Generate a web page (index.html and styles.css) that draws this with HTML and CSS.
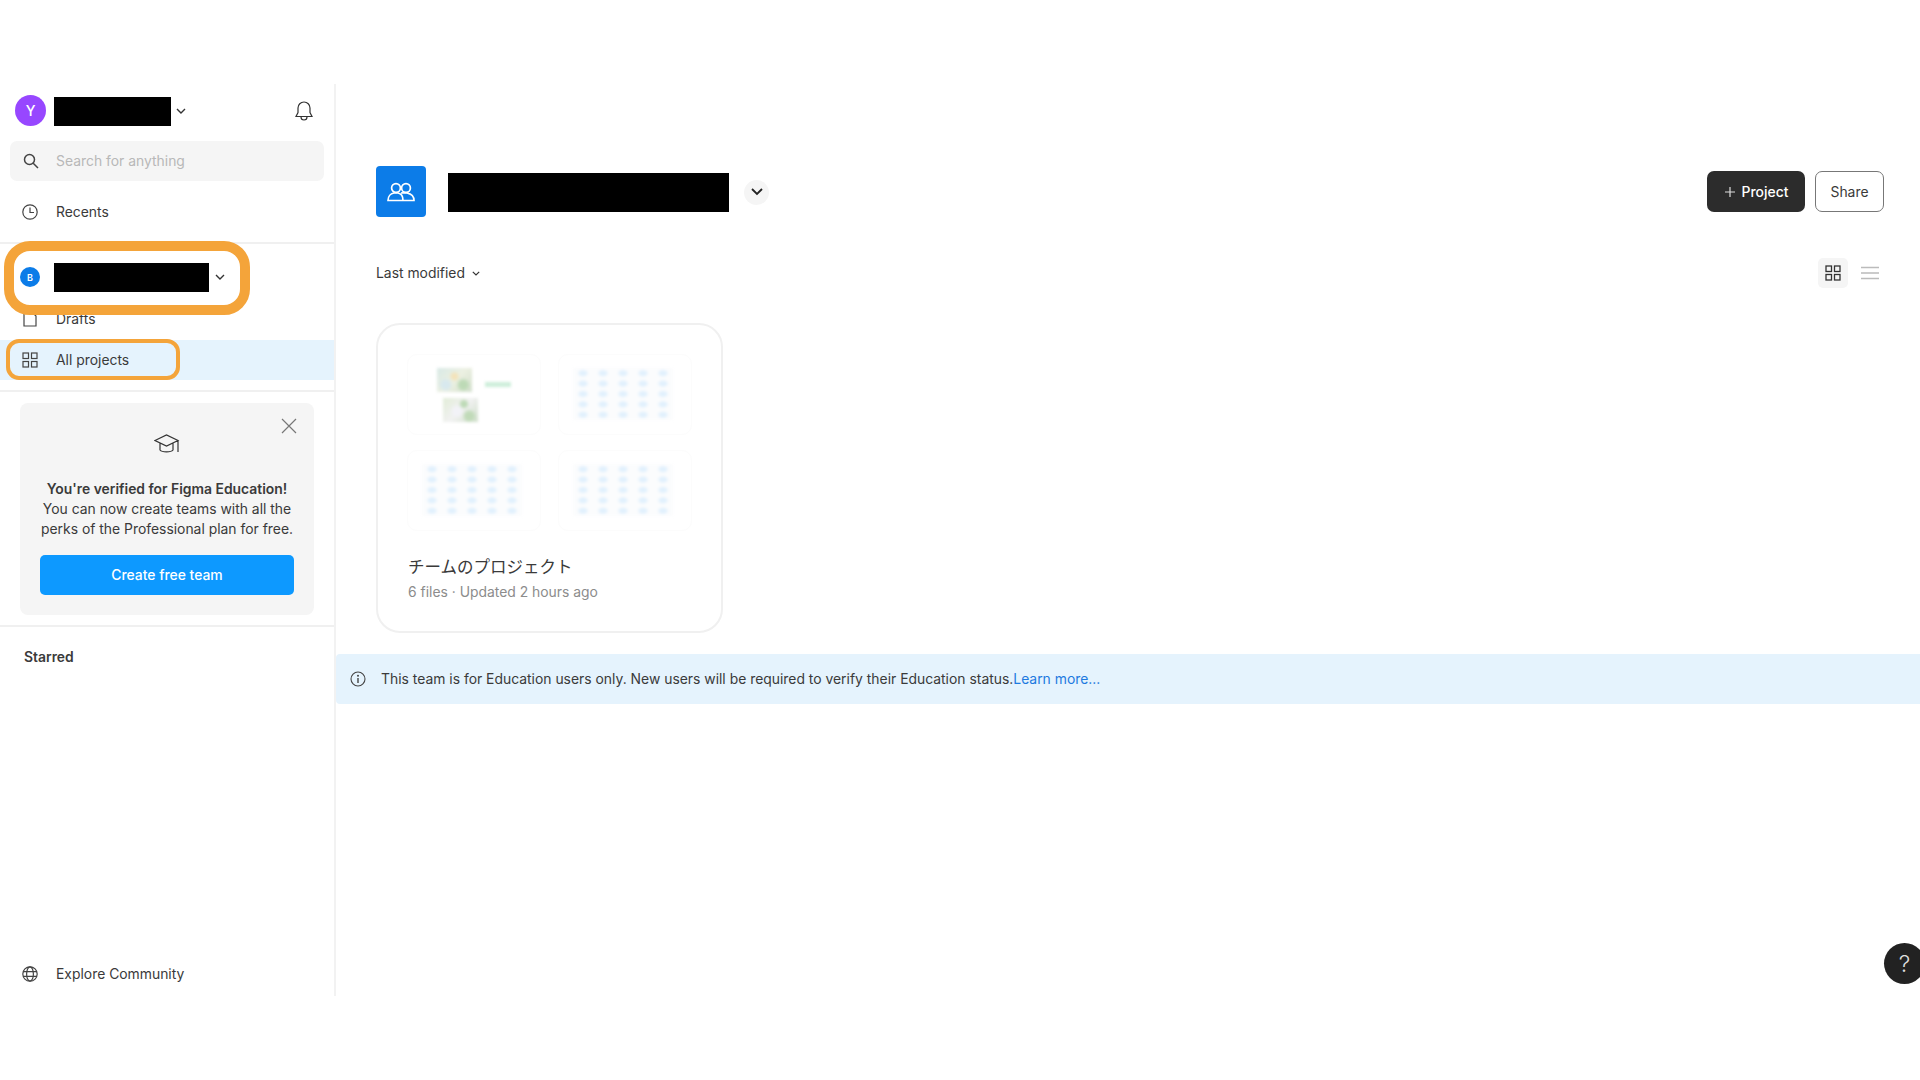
FILE: index.html
```html
<!DOCTYPE html>
<html lang="en">
<head>
<meta charset="utf-8">
<title>Team projects</title>
<link rel="stylesheet" href="styles.css">
</head>
<body>
<div class="app">
  <aside class="sidebar">
    <div class="account">
      <span class="avatar">Y</span>
      <span class="redact redact-account"></span>
      <svg class="chev" width="10" height="6" viewBox="0 0 10 6"><path d="M1 1l4 4 4-4" fill="none" stroke="#333" stroke-width="1.4"/></svg>
      <svg class="bell" width="20" height="22" viewBox="0 0 20 22"><path d="M10 2a6 6 0 0 0-6 6v4.500L2 16.500h16L16 12.500V8a6 6 0 0 0-6-6zM7 17a3 3 0 0 0 6 0" fill="none" stroke="#333" stroke-width="1.200"/></svg>
    </div>
    <div class="search">
      <svg width="16" height="16" viewBox="0 0 16 16"><circle cx="6.500" cy="6.500" r="5" fill="none" stroke="#444" stroke-width="1.500"/><path d="M10.200 10.200L15 15" stroke="#444" stroke-width="1.500"/></svg>
      <span>Search for anything</span>
    </div>
    <div class="nav-row recents">
      <svg class="icon" width="16" height="16" viewBox="0 0 16 16"><circle cx="8" cy="8" r="7.200" fill="none" stroke="#444" stroke-width="1.200"/><path d="M8 3.500V8.500H12" fill="none" stroke="#444" stroke-width="1.200"/></svg>
      <span>Recents</span>
    </div>
    <div class="section team">
      <div class="team-row">
        <span class="team-badge">B</span>
        <span class="redact redact-team"></span>
        <svg class="chev" width="10" height="6" viewBox="0 0 10 6"><path d="M1 1l4 4 4-4" fill="none" stroke="#333" stroke-width="1.400"/></svg>
      </div>
      <div class="nav-row drafts">
        <svg class="icon" width="14" height="16" viewBox="0 0 14 16"><path d="M1 1h8l4 4v10H1z" fill="none" stroke="#444" stroke-width="1.200"/></svg>
        <span>Drafts</span>
      </div>
      <div class="nav-row active">
        <svg class="icon" width="16" height="16" viewBox="0 0 16 16"><g fill="none" stroke="#444" stroke-width="1.200"><rect x="1" y="1" width="5.500" height="5.500"/><rect x="9.500" y="1" width="5.500" height="5.500"/><rect x="1" y="9.500" width="5.500" height="5.500"/><rect x="9.500" y="9.500" width="5.500" height="5.500"/></g></svg>
        <span>All projects</span>
      </div>
    </div>
    <div class="section promo-wrap">
      <div class="promo">
        <svg class="promo-close" width="16" height="16" viewBox="0 0 16 16"><path d="M1 1l14 14M15 1L1 15" stroke="#777" stroke-width="1.200"/></svg>
        <svg class="promo-icon" width="26" height="20" viewBox="0 0 26 20"><path d="M1 6.500L12.500 1 24 6.500 12.500 12zM6 9v7c2 2.500 11 2.500 13 0V9M24 6.500V18" fill="none" stroke="#333" stroke-width="1.200"/></svg>
        <p class="promo-text"><strong>You're verified for Figma Education!</strong><br>You can now create teams with all the<br>perks of the Professional plan for free.</p>
        <div class="promo-btn">Create free team</div>
      </div>
    </div>
    <div class="starred">Starred</div>
    <div class="nav-row explore">
      <svg class="icon" width="16" height="16" viewBox="0 0 16 16"><g fill="none" stroke="#444" stroke-width="1.200"><circle cx="8" cy="8" r="7.200"/><ellipse cx="8" cy="8" rx="3.400" ry="7.200"/><path d="M1 5.700h14M1 10.300h14"/></g></svg>
      <span>Explore Community</span>
    </div>
    <div class="mark mark-team"></div>
    <div class="mark mark-projects"></div>
  </aside>
  <main class="main">
    <div class="page-head">
      <div class="team-icon">
        <svg width="28" height="20" viewBox="0 0 28 20"><g fill="none" stroke="#fff" stroke-width="1.700"><circle cx="9" cy="6" r="4.400"/><circle cx="19" cy="6" r="4.400"/><path d="M1 18.500c0-4.500 3-7 6-7.500h4c3 .5 5 3 5 7.500zM14 11c1-.2 2-.2 3 0h3c4 .8 7 3 7 7.500H16"/></g></svg>
      </div>
      <span class="redact redact-title"></span>
      <span class="round-chev"><svg width="12" height="8" viewBox="0 0 12 8"><path d="M1 1l5 5 5-5" fill="none" stroke="#222" stroke-width="1.800"/></svg></span>
      <div class="head-actions">
        <div class="btn btn-dark"><svg width="12" height="12" viewBox="0 0 12 12"><path d="M6 1v10M1 6h10" stroke="#ddd" stroke-width="1.200"/></svg>Project</div>
        <div class="btn btn-line">Share</div>
      </div>
    </div>
    <div class="toolbar">
      <div class="sort">Last modified <svg width="8" height="5" viewBox="0 0 8 5"><path d="M.8.800L4 4 7.200.800" fill="none" stroke="#333" stroke-width="1.200"/></svg></div>
      <div class="views">
        <span class="view view-on"><svg width="16" height="16" viewBox="0 0 16 16"><g fill="none" stroke="#333" stroke-width="1.300"><rect x="1" y="1" width="5.500" height="5.500"/><rect x="9.500" y="1" width="5.500" height="5.500"/><rect x="1" y="9.500" width="5.500" height="5.500"/><rect x="9.500" y="9.500" width="5.500" height="5.500"/></g></svg></span>
        <span class="view"><svg width="18" height="14" viewBox="0 0 18 14"><path d="M0 1.500h18M0 7h18M0 12.500h18" stroke="#bbb" stroke-width="1.400"/></svg></span>
      </div>
    </div>
    <article class="project">
      <div class="thumbs">
        <div class="thumb">
          <div class="shot shot-a"></div>
          <div class="shot shot-b"></div>
          <div class="mini"></div>
        </div>
        <div class="thumb"><div class="dots"></div></div>
        <div class="thumb"><div class="dots"></div></div>
        <div class="thumb"><div class="dots"></div></div>
      </div>
      <div class="project-name">チームのプロジェクト</div>
      <div class="project-meta">6 files · Updated 2 hours ago</div>
    </article>
    <div class="banner">
      <svg width="16" height="16" viewBox="0 0 16 16"><circle cx="8" cy="8" r="7" fill="none" stroke="#444" stroke-width="1.100"/><path d="M8 7v5" stroke="#444" stroke-width="1.400"/><circle cx="8" cy="4.700" r="1" fill="#444"/></svg>
      <span>This team is for Education users only. New users will be required to verify their Education status.<a class="learn">Learn more...</a></span>
    </div>
  </main>
</div>
<div class="help">?</div>
</body>
</html>
```
FILE: styles.css
```css
* { box-sizing: border-box; }
html, body { margin: 0; height: 100%; overflow: hidden; background: #fff; }
body { font-family: Inter, "Noto Sans CJK JP", sans-serif; font-size: 13.9px; color: #3a3a3a; position: relative; }
.app { display: flex; height: 912px; margin-top: 84px; }
.sidebar { width: 336px; flex: none; border-right: 2px solid #f2f2f2; display: flex; flex-direction: column; position: relative; }
.redact { display: block; background: #000; flex: none; }
.account { display: flex; align-items: center; height: 53px; padding-left: 15px; }
.avatar { width: 31px; height: 31px; border-radius: 50%; background: #9747ff; color: #fff; font-size: 14px; font-weight: 500; display: flex; align-items: center; justify-content: center; flex: none; }
.redact-account { width: 117px; height: 29px; margin: 2px 0 0 8px; }
.chev { margin-left: 5px; flex: none; }
.bell { margin-left: auto; margin-right: 20px; }
.search { display: flex; align-items: center; height: 40px; margin: 4px 10px 0; padding-left: 13px; border-radius: 7px; background: #f5f5f5; color: #b8b8b8; }
.search span { margin-left: 17px; }
.nav-row { display: flex; align-items: center; height: 40px; padding-left: 22px; }
.nav-row .icon { width: 16px; flex: none; margin-right: 17px; }
.nav-row span { margin-left: 1px; }
.recents { margin-top: 11px; }
.section { border-top: 2px solid #f0f0f0; }
.team { margin-top: 10px; padding: 13px 0 10px; border-bottom: 2px solid #f0f0f0; }
.team-row { display: flex; align-items: center; height: 40px; padding-left: 20px; }
.team-badge { width: 20px; height: 20px; border-radius: 50%; background: #0c7ce8; color: #fff; font-size: 9px; font-weight: 600; display: flex; align-items: center; justify-content: center; flex: none; }
.redact-team { width: 155px; height: 29px; margin-left: 14px; }
.team-row .chev { margin-left: 6px; }
.drafts { margin-top: 2px; }
.active { margin-top: 1px; background: #e5f3fd; }
.promo-wrap { border-top: 0; padding: 11px 20px 10px; border-bottom: 2px solid #f0f0f0; }
.promo { position: relative; height: 212px; background: #f5f5f5; border-radius: 8px; padding-top: 31px; text-align: center; }
.promo-close { position: absolute; top: 15px; right: 17px; }
.promo-icon { display: block; margin: 0 auto; }
.promo-text { margin: 25px 0 0; line-height: 20px; }
.promo-text strong { font-weight: 600; }
.promo-btn { margin: 16px 20px 0; height: 40px; line-height: 40px; border-radius: 5px; background: #0d99ff; color: #fff; font-weight: 500; }
.starred { margin: 20px 0 0 24px; font-weight: 600; line-height: 20px; }
.explore { margin-top: auto; margin-bottom: 2px; }
.mark { position: absolute; border-style: solid; border-color: #f4a43a; }
.mark-team { left: 4px; top: 157px; width: 246px; height: 74px; border-width: 10px; border-radius: 26px; }
.mark-projects { left: 6px; top: 255px; width: 174px; height: 41px; border-width: 4px; border-radius: 13px; }
.main { flex: 1; min-width: 0; display: flex; flex-direction: column; padding-top: 82px; }
.page-head { display: flex; align-items: center; height: 51px; margin: 0 36px 0 40px; }
.team-icon { width: 50px; height: 51px; background: #0c7ce8; border-radius: 4px; display: flex; align-items: center; justify-content: center; flex: none; }
.redact-title { width: 281px; height: 39px; margin: 2px 0 0 22px; }
.round-chev { width: 25px; height: 25px; border-radius: 50%; background: #f5f5f5; display: flex; align-items: center; justify-content: center; margin: 1px 0 0 15px; }
.head-actions { margin-left: auto; display: flex; gap: 10px; }
.btn { display: flex; align-items: center; justify-content: center; height: 41px; border-radius: 7px; }
.btn-dark { width: 98px; background: #2c2c2c; color: #fff; font-weight: 500; gap: 6px; }
.btn-line { width: 69px; border: 1.500px solid #777; }
.toolbar { display: flex; align-items: center; justify-content: space-between; height: 30px; margin: 41px 36px 0 40px; }
.sort { display: flex; align-items: center; gap: 7px; }
.views { display: flex; align-items: center; gap: 7px; margin-right: -1px; }
.view { width: 30px; height: 30px; display: flex; align-items: center; justify-content: center; border-radius: 5px; }
.view-on { background: #f5f5f5; }
.project { width: 347px; height: 310px; margin: 35px 0 0 40px; padding: 29px 29px 0; border: 2px solid #f0f0f0; border-radius: 24px; }
.thumbs { display: grid; grid-template-columns: 134px 134px; grid-template-rows: 81px 81px; gap: 15px 17px; }
.thumb { position: relative; border: 1px solid #fcfcfc; border-radius: 10px; }
.dots { position: absolute; left: 14px; top: 13px; width: 100px; height: 52px; filter: blur(1.600px); background-image: radial-gradient(ellipse 5px 3.200px at 50% 50%, #e0f0fd 85%, #fbfcfd); background-size: 20px 10.400px; }
.shot { position: absolute; width: 35px; height: 24px; filter: blur(1.800px); background: radial-gradient(circle at 50% 35%, #f3e3bb 0 3px, transparent 5px), radial-gradient(circle at 75% 70%, #bddab6 0 4px, transparent 7px), radial-gradient(circle at 25% 70%, #d8e9ee 0 4px, transparent 7px), linear-gradient(135deg, #d8e9e6, #ecf0e2 50%, #d2dfcc); }
.shot-a { left: 29px; top: 13px; }
.shot-b { left: 35px; top: 43px; background: radial-gradient(circle at 60% 25%, #bddab6 0 3px, transparent 5px), radial-gradient(circle at 40% 55%, #f2f2f7 0 4px, transparent 7px), radial-gradient(circle at 75% 75%, #c0dab8 0 4px, transparent 7px), linear-gradient(135deg, #e2edd8, #f1f1f1 50%, #cfdfca); }
.mini { position: absolute; left: 77px; top: 27px; width: 26px; height: 5px; filter: blur(1.400px); background: #cdeeda; }
.project-name { margin-top: 26px; margin-left: 1px; font-size: 16.500px; line-height: 20px; }
.project-meta { margin-top: 5px; margin-left: 1px; line-height: 20px; color: #8c8c8c; }
.banner { display: flex; align-items: center; gap: 15px; height: 50px; margin-top: 21px; padding-left: 14px; background: #e5f3fd; border-radius: 4px 0 0 4px; }
.learn { color: #1d7ae0; }
.help { position: absolute; left: 1884px; top: 943px; width: 41px; height: 41px; border-radius: 50%; background: #222; color: #ddd; font-size: 23px; font-weight: 300; display: flex; align-items: center; justify-content: center; }
```
